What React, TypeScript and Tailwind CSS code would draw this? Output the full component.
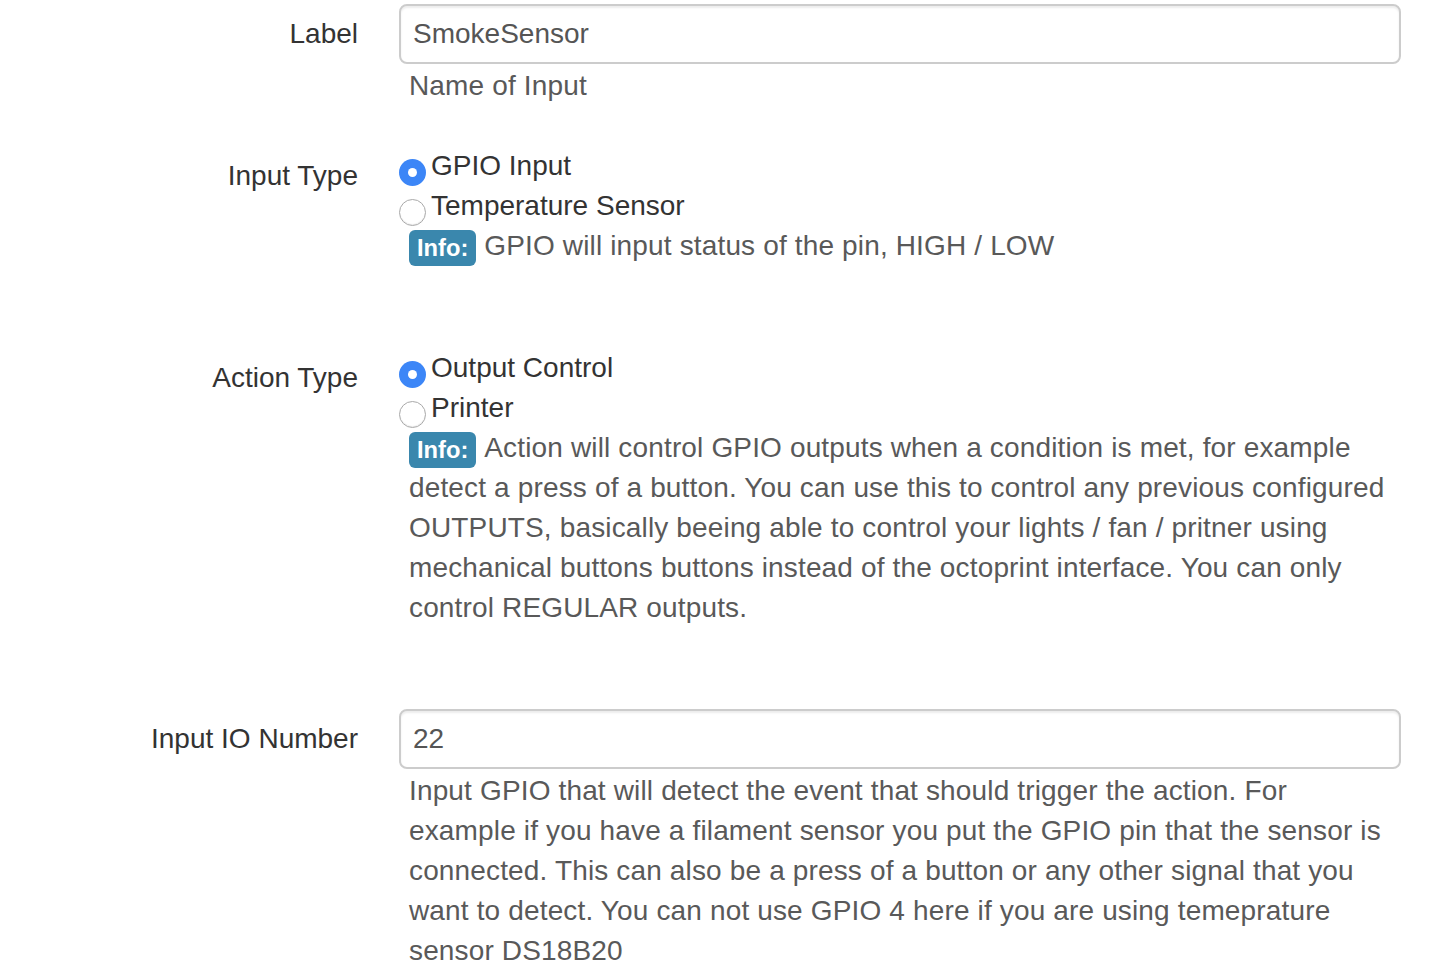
import React from 'react';

/**
 * Input settings form (Bootstrap 2 horizontal form look, 2x scale)
 */

const font = { fontFamily: '"Liberation Sans", Arial, Helvetica, sans-serif' };

interface RadioOption {
  label: string;
  checked?: boolean;
}

const Radio: React.FC<RadioOption> = ({ label, checked = false }) => (
  <label className="flex items-start h-[40px] text-[28px] leading-[40px] text-[#333]">
    {checked ? (
      <span className="mt-[13px] w-[27px] h-[27px] rounded-full bg-[#3c86f7] flex items-center justify-center shrink-0">
        <span className="w-[9px] h-[9px] rounded-full bg-white" />
      </span>
    ) : (
      <span className="mt-[13px] w-[27px] h-[27px] rounded-full bg-white border border-[#a9a9a9] shadow-[inset_0_-1px_1px_rgba(0,0,0,0.08)] shrink-0" />
    )}
    <span className="ml-[5px]">{label}</span>
  </label>
);

const InfoLabel: React.FC = () => (
  <span className="relative top-[3px] inline-block align-[2px] bg-[#3a87ad] text-white font-bold text-[23.7px] leading-[28px] px-[8px] py-[4px] rounded-[6px] mr-[8px] tracking-normal">
    Info:
  </span>
);

const HelpBlock: React.FC<{ children: React.ReactNode; className?: string }> = ({ children, className = '' }) => (
  <div className={`pl-[10px] text-[28px] leading-[40px] text-[#595959] tracking-[0.15px] ${className}`}>{children}</div>
);

const TextInput: React.FC<{ value: string }> = ({ value }) => (
  <input
    type="text"
    readOnly
    value={value}
    className="block w-full h-[60px] px-[12px] text-[28px] text-[#555] border-2 border-[#cccccc] rounded-[8px] shadow-[inset_0_2px_2px_rgba(0,0,0,0.075)] bg-white outline-none"
    style={font}
  />
);

const Group: React.FC<{ label: string; children: React.ReactNode; className?: string }> = ({ label, children, className = '' }) => (
  <div className={`flex ${className}`}>
    <div className="w-[358px] shrink-0 pt-[10px] text-right text-[28px] leading-[40px] text-[#333]">{label}</div>
    <div className="ml-[41px] w-[1002px]">{children}</div>
  </div>
);

export default function App() {
  return (
    <div className="min-h-screen bg-white pt-[4px]" style={font}>
      <Group label="Label">
        <TextInput value="SmokeSensor" />
        <HelpBlock className="mt-[2px]">Name of Input</HelpBlock>
      </Group>

      <Group label="Input Type" className="mt-[40px]">
        <Radio label="GPIO Input" checked />
        <Radio label="Temperature Sensor" />
        <HelpBlock>
          <InfoLabel />
          GPIO will input status of the pin, HIGH / LOW
        </HelpBlock>
      </Group>

      <Group label="Action Type" className="mt-[82px]">
        <Radio label="Output Control" checked />
        <Radio label="Printer" />
        <HelpBlock>
          <InfoLabel />
          Action will control GPIO outputs when a condition is met, for example
          <br />
          detect a press of a button. You can use this to control any previous configured
          <br />
          OUTPUTS, basically beeing able to control your lights / fan / pritner using
          <br />
          mechanical buttons buttons instead of the octoprint interface. You can only
          <br />
          control REGULAR outputs.
        </HelpBlock>
      </Group>

      <Group label="Input IO Number" className="mt-[81px]">
        <TextInput value="22" />
        <HelpBlock className="mt-[2px]">
          Input GPIO that will detect the event that should trigger the action. For
          <br />
          example if you have a filament sensor you put the GPIO pin that the sensor is
          <br />
          connected. This can also be a press of a button or any other signal that you
          <br />
          want to detect. You can not use GPIO 4 here if you are using temeprature
          <br />
          sensor DS18B20
        </HelpBlock>
      </Group>
    </div>
  );
}
